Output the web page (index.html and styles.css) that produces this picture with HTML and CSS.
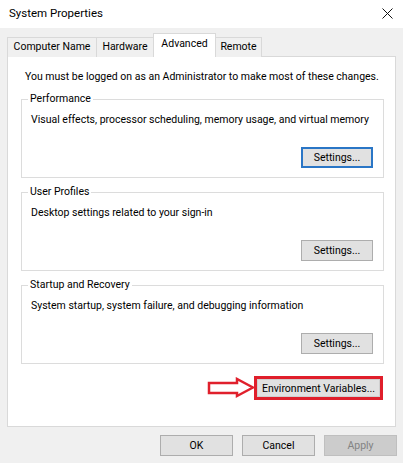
FILE: index.html
```html
<!DOCTYPE html>
<html>
<head>
<meta charset="utf-8">
<link rel="stylesheet" href="styles.css">
</head>
<body>
<div class="window">
  <div class="titlebar">
    <span class="title">System Properties</span>
    <svg class="close" width="11" height="11" viewBox="0 0 11 11"><path d="M0.5 0.5 L10.5 10.5 M10.5 0.5 L0.5 10.5" stroke="#111" stroke-width="1" fill="none"/></svg>
  </div>
  <div class="tabs">
    <div class="tab t1">Computer Name</div>
    <div class="tab t2">Hardware</div>
    <div class="tab t3 active">Advanced</div>
    <div class="tab t4">Remote</div>
  </div>
  <div class="panel">
    <p class="note">You must be logged on as an Administrator to make most of these changes.</p>
    <fieldset class="group">
      <legend>Performance</legend>
      <p class="desc">Visual effects, processor scheduling, memory usage, and virtual memory</p>
      <div class="btnrow"><button class="btn default">Settings...</button></div>
    </fieldset>
    <fieldset class="group">
      <legend>User Profiles</legend>
      <p class="desc">Desktop settings related to your sign-in</p>
      <div class="btnrow"><button class="btn">Settings...</button></div>
    </fieldset>
    <fieldset class="group">
      <legend>Startup and Recovery</legend>
      <p class="desc">System startup, system failure, and debugging information</p>
      <div class="btnrow"><button class="btn">Settings...</button></div>
    </fieldset>
    <div class="envrow">
      <svg class="arrow" width="48" height="22" viewBox="0 0 48 22"><path d="M2 6 L30 6 L30 2 L46 10.5 L30 19 L30 16 L2 16 Z" fill="#fff" stroke="#e0202c" stroke-width="2.5" stroke-linejoin="miter"/></svg>
      <div class="highlight"><button class="btn env">Environment Variables...</button></div>
    </div>
  </div>
  <div class="footer">
    <button class="btn foot">OK</button>
    <button class="btn foot">Cancel</button>
    <button class="btn foot disabled">Apply</button>
  </div>
</div>
</body>
</html>
```

FILE: styles.css
```css
* { box-sizing: border-box; }
html, body { margin: 0; padding: 0; }
body {
  width: 403px;
  height: 463px;
  overflow: hidden;
  background: #f0f0f0;
  font-family: Roboto, "Liberation Sans", sans-serif;
  font-size: 10.5px;
  color: #000;
}
.window { width: 403px; height: 463px; display: flex; flex-direction: column; }
.titlebar {
  height: 28px;
  background: #fff;
  display: flex;
  align-items: center;
  justify-content: space-between;
  padding: 0 10px 2px 9px;
}
.title { font-size: 11.5px; color: #000; }
.close { display: block; margin-top: 1px; }
.tabs {
  display: flex;
  align-items: flex-end;
  height: 29px;
  padding-left: 7px;
  position: relative;
  z-index: 1;
  margin-bottom: -1px;
}
.tab {
  height: 20px;
  border: 1px solid #d9d9d9;
  border-bottom: none;
  border-right: none;
  background: #f0f0f0;
  line-height: 18px;
  text-align: center;
  white-space: nowrap;
}
.t1 { width: 89px; }
.t2 { width: 57px; }
.t3 { width: 63px; }
.t4 { width: 46px; border-right: 1px solid #d9d9d9; }
.tab.active {
  height: 24px;
  background: #fff;
  border-right: 1px solid #d9d9d9;
  line-height: 19px;
}
.tab.active + .tab { border-left: none; }
.panel {
  margin: 0 7px 0 7px;
  height: 371px;
  background: #fff;
  border: 1px solid #d9d9d9;
  padding: 13px 11px 0 17px;
}
.note { margin: 0; line-height: 14px; white-space: nowrap; }
.group {
  margin: 8px 0 0 -4px;
  padding: 0 10px 9px 9px;
  border: 1px solid #dcdcdc;
  min-width: 0;
}
.group + .group { margin-top: 7px; }
.group legend {
  padding: 0 2px;
  margin-left: -3px;
  line-height: 14px;
}
.desc { margin: 7px 0 0 0; line-height: 14px; white-space: nowrap; }
.btnrow { display: flex; justify-content: flex-end; margin-top: 20px; }
.btn {
  font-family: inherit;
  font-size: 10.5px;
  color: #000;
  background: #e1e1e1;
  border: 1px solid #adadad;
  border-radius: 0;
  height: 21px;
  width: 72px;
  padding: 0;
  margin: 0;
  line-height: 18px;
  white-space: nowrap;
}
.btn.default { border: 2px solid #2a76c6; }
.envrow {
  display: flex;
  justify-content: flex-end;
  align-items: center;
  margin-top: 12px;
  padding-right: 1px;
}
.arrow { display: block; margin-right: -1px; }
.highlight {
  border: 3px solid #e01f2b;
  height: 24px;
  width: 129px;
}
.btn.env {
  width: 123px;
  height: 18px;
  border: 1px solid #cfcfcf;
  line-height: 15px;
  display: block;
}
.footer {
  display: flex;
  justify-content: flex-end;
  gap: 9px;
  margin-top: 8px;
  padding-right: 6px;
}
.btn.foot { width: 73px; }
.btn.disabled { background: #cccccc; border-color: #bfbfbf; color: #838383; }
```
